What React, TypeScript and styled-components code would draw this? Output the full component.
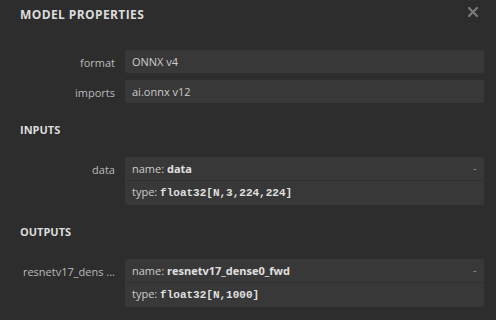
import React from "react";
import styled, { createGlobalStyle } from "styled-components";

const GlobalStyle = createGlobalStyle`
  html, body {
    margin: 0;
    padding: 0;
    background: #2d2d2d;
  }
  body {
    font-family: "Open Sans", "Noto Sans", sans-serif;
    color: #cccccc;
  }
`;

interface Line {
  label: string;
  value: string;
  code?: boolean;
  bold?: boolean;
}

interface Item {
  name: string;
  lines: Line[];
  expander?: boolean;
}

const properties: Item[] = [
  { name: "format", lines: [{ label: "", value: "ONNX v4" }] },
  { name: "imports", lines: [{ label: "", value: "ai.onnx v12" }] },
];

const inputs: Item[] = [
  {
    name: "data",
    expander: true,
    lines: [
      { label: "name: ", value: "data", bold: true },
      { label: "type: ", value: "float32[N,3,224,224]", code: true },
    ],
  },
];

const outputs: Item[] = [
  {
    name: "resnetv17_dense0_fwd",
    expander: true,
    lines: [
      { label: "name: ", value: "resnetv17_dense0_fwd", bold: true },
      { label: "type: ", value: "float32[N,1000]", code: true },
    ],
  },
];

// long argument names are shortened the same way the viewer does
const shortName = (name: string) => (name.length > 16 ? name.slice(0, 14) + " ..." : name);

function PropItem({ item }: { item: Item }) {
  return (
    <ItemRow>
      <ItemName title={item.name}>{shortName(item.name)}</ItemName>
      <ValueBox>
        {item.lines.map((line, i) => (
          <ValueLine key={i} $border={i > 0} $multi={item.lines.length > 1}>
            {line.label}
            {line.code ? <Code>{line.value}</Code> : line.bold ? <b>{line.value}</b> : line.value}
            {item.expander && i === 0 ? <Expander>-</Expander> : null}
          </ValueLine>
        ))}
      </ValueBox>
    </ItemRow>
  );
}

export default function App() {
  return (
    <Sidebar>
      <GlobalStyle />
      <TitleBar>
        <Title>MODEL PROPERTIES</Title>
        <CloseButton>
          <svg width="10" height="10" viewBox="0 0 10 10">
            <path d="M1 1 L9 9 M9 1 L1 9" stroke="#7a7a7a" strokeWidth="2.2" strokeLinecap="square" />
          </svg>
        </CloseButton>
      </TitleBar>
      <Section $first>
        {properties.map((item) => (
          <PropItem key={item.name} item={item} />
        ))}
      </Section>
      <Header>Inputs</Header>
      <Section>
        {inputs.map((item) => (
          <PropItem key={item.name} item={item} />
        ))}
      </Section>
      <Header>Outputs</Header>
      <Section>
        {outputs.map((item) => (
          <PropItem key={item.name} item={item} />
        ))}
      </Section>
    </Sidebar>
  );
}

const Sidebar = styled.div`
  width: 496px;
  height: 320px;
  box-sizing: border-box;
  padding: 0 12px 0 20px;
  background: #2d2d2d;
  overflow: hidden;
`;
const TitleBar = styled.div`
  height: 29px;
  padding-bottom: 1px;
  display: flex;
  align-items: center;
  justify-content: space-between;
`;
const Title = styled.h1`
  margin: 0;
  font-size: 12px;
  font-weight: bold;
  letter-spacing: 0.4px;
  color: #dcdcdc;
`;
const CloseButton = styled.span`
  display: flex;
  margin: -5px 6px 0 0;
  cursor: pointer;
`;
const Section = styled.div<{ $first?: boolean }>`
  display: flex;
  flex-direction: column;
  gap: 7px;
  margin-top: ${(p) => (p.$first ? "20px" : "0")};
`;
const Header = styled.h2`
  margin: 20px 0;
  font-size: 11px;
  font-weight: bold;
  line-height: 14px;
  text-transform: uppercase;
  color: #dcdcdc;
`;
const ItemRow = styled.div`
  display: grid;
  grid-template-columns: 95px 1fr;
  column-gap: 10px;
  align-items: start;
`;
const ItemName = styled.div`
  font-size: 11px;
  line-height: 13px;
  padding-top: 6px;
  text-align: right;
  color: #bbbbbb;
  white-space: nowrap;
  overflow: hidden;
`;
const ValueBox = styled.div`
  background: #383838;
  border: 1px solid #383838;
  border-radius: 2px;
  font-size: 11px;
  color: #cccccc;
  b {
    font-weight: bold;
    color: #e0e0e0;
  }
`;
const ValueLine = styled.div<{ $border: boolean; $multi: boolean }>`
  position: relative;
  padding: 4px 6px;
  line-height: ${(p) => (p.$multi ? "14px" : "13px")};
  border-top: ${(p) => (p.$border ? "1px solid #2f2f2f" : "none")};
`;
const Code = styled.code`
  font-family: "Liberation Mono", monospace;
  font-weight: bold;
  font-size: 11px;
  line-height: 14px;
  color: #e0e0e0;
`;
const Expander = styled.span`
  position: absolute;
  right: 5px;
  top: 4px;
  font-family: "Liberation Mono", monospace;
  color: #888888;
`;
